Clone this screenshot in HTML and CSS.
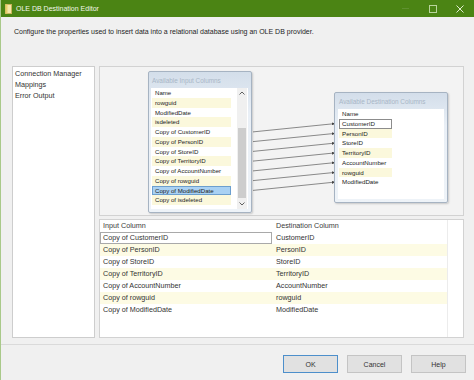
FILE: index.html
```html
<!DOCTYPE html>
<html lang="en">
<head>
    <meta charset="UTF-8">
    <title>OLE DB Destination Editor</title>
    <link rel="stylesheet" href="styles.css">
</head>
<body>

    <!-- window title bar -->
    <div class="titlebar">
        <svg class="app-icon" width="7" height="10" viewBox="0 0 7 10">
            <rect x="0.5" y="0.5" width="6" height="9" fill="#f4e7a8" stroke="#c9b35a"/>
            <rect x="0.5" y="0.5" width="2" height="9" fill="#e6cf6a"/>
        </svg>
        <span class="title">OLE DB Destination Editor</span>
        <div class="win-buttons">
            <span class="win-min"></span>
            <span class="win-max"></span>
            <svg class="win-close" width="8" height="8" viewBox="0 0 8 8">
                <path d="M0.5 0.5 L7.5 7.5 M7.5 0.5 L0.5 7.5" stroke="#dfeccf" stroke-width="1"/>
            </svg>
        </div>
    </div>

    <p class="intro">Configure the properties used to insert data into a relational database using an OLE DB provider.</p>

    <div class="content">
        <ul class="nav">
            <li>Connection Manager</li>
            <li>Mappings</li>
            <li>Error Output</li>
        </ul>

        <div class="main">
            <!-- mapping diagram -->
            <div class="mapping">
                <svg class="links" width="362" height="148" viewBox="100 67 362 148">
                    <defs>
                        <marker id="arrow" markerUnits="userSpaceOnUse" markerWidth="3" markerHeight="3" refX="3" refY="1.5" orient="auto">
                            <path d="M0 0 L3 1.5 L0 3 Z" fill="#444"/>
                        </marker>
                    </defs>
                    <g stroke="#5a5a5a" stroke-width="0.7" marker-end="url(#arrow)">
                        <line x1="253" y1="131.9" x2="335" y2="123.6"/>
                        <line x1="253" y1="141.6" x2="335" y2="133.4"/>
                        <line x1="253" y1="151.4" x2="335" y2="143.1"/>
                        <line x1="253" y1="161.1" x2="335" y2="152.9"/>
                        <line x1="253" y1="170.9" x2="335" y2="162.6"/>
                        <line x1="253" y1="180.6" x2="335" y2="172.4"/>
                        <line x1="253" y1="190.4" x2="335" y2="182.1"/>
                    </g>
                </svg>

                <div class="colbox colbox-input">
                    <div class="colbox-title">Available Input Columns</div>
                    <div class="colbox-list">
                        <ul class="cols">
                            <li>Name</li>
                            <li class="alt">rowguid</li>
                            <li>ModifiedDate</li>
                            <li class="alt">isdeleted</li>
                            <li>Copy of CustomerID</li>
                            <li class="alt">Copy of PersonID</li>
                            <li>Copy of StoreID</li>
                            <li class="alt">Copy of TerritoryID</li>
                            <li>Copy of AccountNumber</li>
                            <li class="alt">Copy of rowguid</li>
                            <li class="selected">Copy of ModifiedDate</li>
                            <li class="alt">Copy of isdeleted</li>
                        </ul>
                        <div class="scrollbar">
                            <svg class="scroll-arrow" width="6" height="4" viewBox="0 0 6 4">
                                <path d="M0.5 3.5 L3 1 L5.5 3.5" fill="none" stroke="#606060" stroke-width="1"/>
                            </svg>
                            <div class="scroll-track">
                                <div class="scroll-thumb"></div>
                            </div>
                            <svg class="scroll-arrow" width="6" height="4" viewBox="0 0 6 4">
                                <path d="M0.5 0.5 L3 3 L5.5 0.5" fill="none" stroke="#606060" stroke-width="1"/>
                            </svg>
                        </div>
                    </div>
                </div>

                <div class="colbox colbox-dest">
                    <div class="colbox-title">Available Destination Columns</div>
                    <div class="colbox-list">
                        <ul class="cols">
                            <li>Name</li>
                            <li class="focus">CustomerID</li>
                            <li class="alt">PersonID</li>
                            <li>StoreID</li>
                            <li class="alt">TerritoryID</li>
                            <li>AccountNumber</li>
                            <li class="alt">rowguid</li>
                            <li>ModifiedDate</li>
                        </ul>
                    </div>
                </div>
            </div>

            <!-- mapping grid -->
            <div class="grid">
                <div class="grid-rows">
                    <div class="grid-row grid-head">
                        <span>Input Column</span>
                        <span>Destination Column</span>
                    </div>
                    <div class="grid-row">
                        <span class="cell-focus">Copy of CustomerID</span>
                        <span>CustomerID</span>
                    </div>
                    <div class="grid-row alt">
                        <span>Copy of PersonID</span>
                        <span>PersonID</span>
                    </div>
                    <div class="grid-row">
                        <span>Copy of StoreID</span>
                        <span>StoreID</span>
                    </div>
                    <div class="grid-row alt">
                        <span>Copy of TerritoryID</span>
                        <span>TerritoryID</span>
                    </div>
                    <div class="grid-row">
                        <span>Copy of AccountNumber</span>
                        <span>AccountNumber</span>
                    </div>
                    <div class="grid-row alt">
                        <span>Copy of rowguid</span>
                        <span>rowguid</span>
                    </div>
                    <div class="grid-row">
                        <span>Copy of ModifiedDate</span>
                        <span>ModifiedDate</span>
                    </div>
                </div>
            </div>
        </div>
    </div>

    <div class="footer">
        <button class="btn btn-default">OK</button>
        <button class="btn">Cancel</button>
        <button class="btn">Help</button>
    </div>

</body>
</html>
```

FILE: styles.css
```css
body {
    margin: 0;
    width: 474px;
    height: 380px;
    overflow: hidden;
    background-color: #f0f0f0;
    font-family: "Liberation Sans", Arial, sans-serif;
    color: #222;
    box-sizing: border-box;
    border-left: 1px solid #a9c98a;
}

ul {
    list-style: none;
    margin: 0;
    padding: 0;
}

/* Title bar */
.titlebar {
    height: 17px;
    display: flex;
    align-items: center;
    background-color: #4b8414;
    color: #fff;
    padding-left: 4px;
}

.app-icon {
    display: block;
    margin-right: 4px;
}

.title {
    font-size: 7px;
    color: #f2f7ec;
}

.win-buttons {
    margin-left: auto;
    display: flex;
    align-items: center;
    height: 100%;
}

.win-min {
    width: 7px;
    height: 1px;
    background-color: #5f9130;
    margin-right: 20px;
}

.win-max {
    width: 6px;
    height: 6px;
    border: 1px solid #b9d49c;
    margin-right: 19px;
}

.win-close {
    display: block;
    margin-right: 10px;
}

/* Intro text */
.intro {
    margin: 0;
    padding: 10px 14px 0 13px;
    font-size: 7px;
    line-height: 10px;
    color: #1e1e1e;
}

/* Main content */
.content {
    display: flex;
    gap: 4px;
    margin-top: 29px;
    padding-left: 11px;
    height: 272px;
}

.nav {
    width: 83px;
    box-sizing: border-box;
    background-color: #fff;
    border: 1px solid #cdcdcd;
    padding: 1px 2px;
    font-size: 7.2px;
    line-height: 11px;
    color: #333;
}

.main {
    width: 365px;
    display: flex;
    flex-direction: column;
    gap: 3px;
}

.mapping {
    position: relative;
    height: 150px;
    box-sizing: border-box;
    border: 1px solid #d2d2d2;
    background-color: #f3f3f3;
}

.links {
    position: absolute;
    left: 0;
    top: 0;
}

/* Column boxes in the diagram */
.colbox {
    position: absolute;
    box-sizing: border-box;
    border: 1px solid #a6b3c2;
    border-radius: 2px;
    background: linear-gradient(#d3deea, #e9eff6 30%, #eef3f8);
    box-shadow: 1px 1px 2px rgba(0, 0, 0, 0.18);
    padding: 0 3px 4px 2px;
    display: flex;
    flex-direction: column;
}

.colbox-input {
    left: 48px;
    top: 4px;
    width: 104px;
    height: 142px;
}

.colbox-dest {
    left: 234px;
    top: 25px;
    width: 114px;
    height: 111px;
    padding: 0 3px 3px 3px;
}

.colbox-title {
    height: 16px;
    line-height: 17px;
    font-size: 6.4px;
    color: #a8b6c6;
    padding-left: 1px;
    white-space: nowrap;
}

.colbox-list {
    flex: 1;
    display: flex;
    background-color: #fff;
    padding-left: 1px;
}

.cols {
    font-size: 6.1px;
    line-height: 9.75px;
    color: #222;
}

.colbox-input .cols {
    width: 79px;
}

.colbox-dest .cols {
    width: 53px;
    font-size: 6.2px;
}

.cols li {
    height: 9.75px;
    padding-left: 3px;
    white-space: nowrap;
    box-sizing: border-box;
}

.cols li.alt {
    background-color: #fbf8dc;
}

.cols li.selected {
    background-color: #a9d1f3;
    border: 1px solid #6c9fcf;
    line-height: 7.75px;
    padding-left: 2px;
}

.cols li.focus {
    border: 1px solid #8c8c8c;
    line-height: 7.75px;
    padding-left: 2px;
}

/* Scrollbar of the input list */
.scrollbar {
    margin-left: auto;
    width: 10px;
    margin-right: 1px;
    display: flex;
    flex-direction: column;
    align-items: center;
    background-color: #f0f0f0;
}

.scroll-arrow {
    display: block;
    margin: 3px 0;
}

.scroll-track {
    flex: 1;
    width: 100%;
    padding-top: 30px;
    padding-bottom: 1px;
    box-sizing: border-box;
}

.scroll-thumb {
    height: 70px;
    margin: 0 1px;
    background-color: #cdcdcd;
}

/* Mapping grid */
.grid {
    flex: 1;
    box-sizing: border-box;
    border: 1px solid #d2d2d2;
    background-color: #fff;
}

.grid-rows {
    width: 347px;
    height: 100%;
    border-right: 1px solid #ececec;
}

.grid-row {
    display: grid;
    grid-template-columns: 173px 174px;
    height: 12px;
    font-size: 7.2px;
    line-height: 12px;
    color: #333;
}

.grid-row span {
    padding-left: 3px;
    white-space: nowrap;
    box-sizing: border-box;
}

.grid-row.alt {
    background-color: #fdfbe4;
}

.grid-head {
    color: #3a3a3a;
}

.grid-row .cell-focus {
    border: 1px solid #a9a9a9;
    line-height: 10px;
    padding-left: 2px;
    margin-right: 1px;
}

/* Footer buttons */
.footer {
    margin-top: 6px;
    border-top: 1px solid #dadada;
    display: flex;
    justify-content: flex-end;
    gap: 9px;
    padding: 10px 8px 0 0;
}

.btn {
    width: 55px;
    height: 18px;
    padding: 0;
    font-family: "Liberation Sans", Arial, sans-serif;
    font-size: 7px;
    color: #333;
    background-color: #e1e1e1;
    border: 1px solid #c4c4c4;
    border-radius: 0;
}

.btn-default {
    border-color: #4d8fcb;
}
```
